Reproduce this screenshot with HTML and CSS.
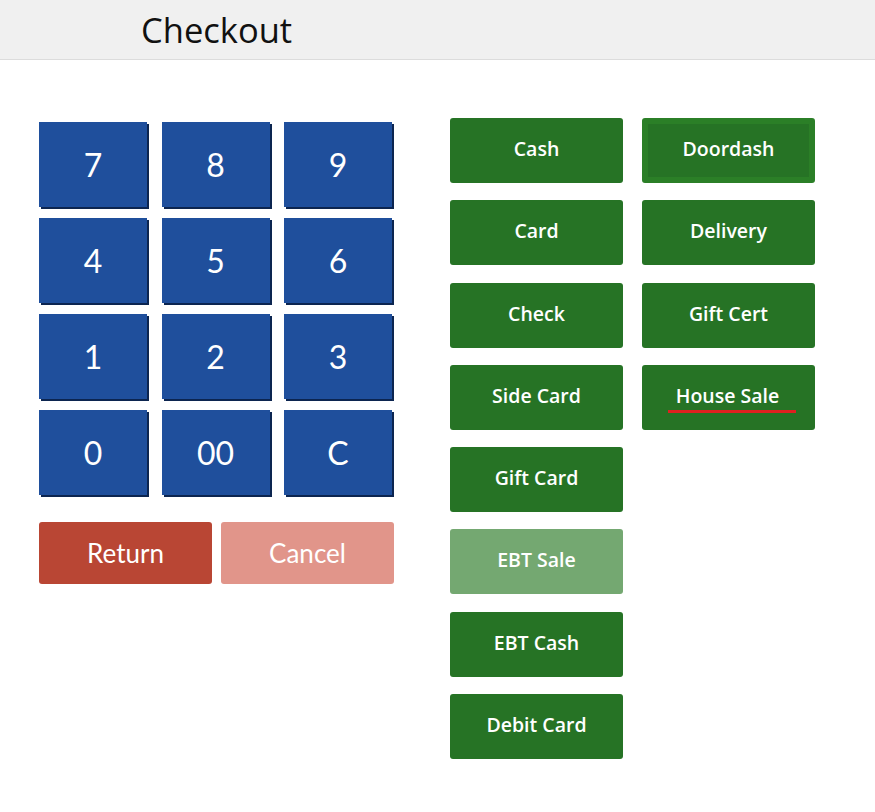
FILE: index.html
```html
<!DOCTYPE html>
<html>
<head>
<meta charset="utf-8">
<link rel="stylesheet" href="styles.css">
</head>
<body>
<header class="topbar"><h1 class="title">Checkout</h1></header>
<main class="main">
  <section class="pad">
    <div class="keys">
      <button class="key">7</button><button class="key">8</button><button class="key">9</button>
      <button class="key">4</button><button class="key">5</button><button class="key">6</button>
      <button class="key">1</button><button class="key">2</button><button class="key">3</button>
      <button class="key">0</button><button class="key">00</button><button class="key">C</button>
    </div>
    <div class="actions">
      <button class="act return">Return</button>
      <button class="act cancel">Cancel</button>
    </div>
  </section>
  <section class="pay">
    <div class="paycol">
      <button class="tender">Cash</button>
      <button class="tender">Card</button>
      <button class="tender">Check</button>
      <button class="tender">Side Card</button>
      <button class="tender">Gift Card</button>
      <button class="tender faded">EBT Sale</button>
      <button class="tender">EBT Cash</button>
      <button class="tender">Debit Card</button>
    </div>
    <div class="paycol">
      <button class="tender focused">Doordash</button>
      <button class="tender">Delivery</button>
      <button class="tender">Gift Cert</button>
      <button class="tender marked"><span class="mark">House Sale</span></button>
    </div>
  </section>
</main>
</body>
</html>
```
FILE: styles.css
```css
* { box-sizing: border-box; }
html, body { margin: 0; padding: 0; background: #fff; }
body { font-family: "Lato", "Liberation Sans", sans-serif; }

.topbar {
  height: 60px;
  background: #f0f0f0;
  border-bottom: 1px solid #dcdcdc;
  display: flex;
  align-items: center;
  padding-left: 141px;
}
.title {
  margin: 0;
  font-family: "Open Sans", "Liberation Sans", sans-serif;
  font-weight: 400;
  font-size: 34.5px;
  color: #111;
  letter-spacing: 0;
}

.main {
  display: flex;
  padding: 58px 0 0 39px;
  gap: 56px;
}

.pad { margin-top: 4px; width: 355px; }

.keys {
  display: grid;
  grid-template-columns: repeat(3, 108px);
  grid-auto-rows: 85px;
  column-gap: 14.5px;
  row-gap: 11px;
}
.key {
  border: 0;
  margin: 0;
  padding: 0;
  background: #1f4f9c;
  box-shadow: 2px 2px 0 #0c2550;
  color: #fff;
  font-family: inherit;
  font-size: 32px;
  font-weight: 400;
}

.actions {
  display: flex;
  gap: 9px;
  margin-top: 27px;
}
.act {
  width: 173px;
  height: 62px;
  border: 0;
  border-radius: 3px;
  color: #fff;
  font-family: inherit;
  font-size: 26px;
  font-weight: 400;
  padding: 0;
}
.return { background: #b94634; }
.cancel { background: #e1958a; }

.pay { display: flex; gap: 19px; }
.paycol {
  display: flex;
  flex-direction: column;
  gap: 17.3px;
}
.tender {
  width: 173px;
  height: 65px;
  flex: none;
  border: 0;
  border-radius: 3px;
  background: #267325;
  color: #fff;
  font-family: "Open Sans", "Liberation Sans", sans-serif;
  font-size: 19.5px;
  font-weight: 600;
  padding: 0 0 4px;
}
.tender.faded { background: #74a871; }
.tender.focused {
  border: 6px solid #2b7f27;
  background: #267325;
}
.tender.marked { padding: 0 0 0 7px; }
.mark {
  display: inline-block;
  padding: 0 17px 1px 8px;
  border-bottom: 3px solid #e02020;
  line-height: 26px;
}
```
